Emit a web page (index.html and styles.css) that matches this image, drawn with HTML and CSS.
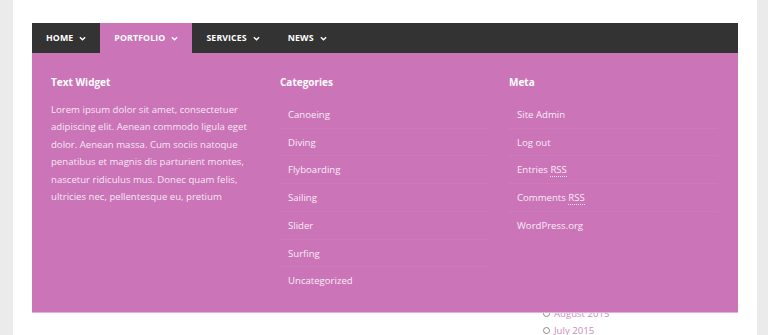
FILE: index.html
```html
<!DOCTYPE html>
<html lang="en">
<head>
<meta charset="utf-8">
<title>Mega menu</title>
<link rel="stylesheet" href="styles.css">
</head>
<body>
<div class="page">
  <header class="masthead">
    <nav class="nav">
      <ul class="menu">
        <li class="menu-item"><a href="#">Home<svg class="chev" viewBox="0 0 8 5"><path d="M1 1l3 3 3-3"/></svg></a></li>
        <li class="menu-item active"><a href="#">Portfolio<svg class="chev" viewBox="0 0 8 5"><path d="M1 1l3 3 3-3"/></svg></a></li>
        <li class="menu-item"><a href="#">Services<svg class="chev" viewBox="0 0 8 5"><path d="M1 1l3 3 3-3"/></svg></a></li>
        <li class="menu-item"><a href="#">News<svg class="chev" viewBox="0 0 8 5"><path d="M1 1l3 3 3-3"/></svg></a></li>
      </ul>
    </nav>
    <div class="mega">
      <section class="col">
        <h3 class="col-title">Text Widget</h3>
        <p class="col-text">Lorem ipsum dolor sit amet, consectetuer adipiscing elit. Aenean commodo ligula eget dolor. Aenean massa. Cum sociis natoque penatibus et magnis dis parturient montes, nascetur ridiculus mus. Donec quam felis, ultricies nec, pellentesque eu, pretium</p>
      </section>
      <section class="col">
        <h3 class="col-title">Categories</h3>
        <ul class="links">
          <li><a href="#">Canoeing</a></li>
          <li><a href="#">Diving</a></li>
          <li><a href="#">Flyboarding</a></li>
          <li><a href="#">Sailing</a></li>
          <li><a href="#">Slider</a></li>
          <li><a href="#">Surfing</a></li>
          <li><a href="#">Uncategorized</a></li>
        </ul>
      </section>
      <section class="col">
        <h3 class="col-title">Meta</h3>
        <ul class="links">
          <li><a href="#">Site Admin</a></li>
          <li><a href="#">Log out</a></li>
          <li><a href="#">Entries <abbr title="Really Simple Syndication">RSS</abbr></a></li>
          <li><a href="#">Comments <abbr title="Really Simple Syndication">RSS</abbr></a></li>
          <li><a href="#">WordPress.org</a></li>
        </ul>
      </section>
    </div>
  </header>
  <div class="content">
    <main class="main"></main>
    <aside class="sidebar">
      <ul class="archive">
        <li><a href="#">August 2015</a></li>
        <li><a href="#">July 2015</a></li>
      </ul>
    </aside>
  </div>
</div>
</body>
</html>
```

FILE: styles.css
```css
* { box-sizing: border-box; }
html, body { margin: 0; height: 100%; }
body {
  background: #ebebeb;
  font-family: "Open Sans", "Liberation Sans", sans-serif;
  padding: 0 11px 0 13px;
  overflow: hidden;
}
.page {
  background: #fff;
  height: 100%;
  padding: 23px 19px 0;
}
.masthead { position: relative; }
.nav { background: #333; height: 30px; }
.menu { list-style: none; margin: 0; padding: 0; display: flex; height: 100%; }
.menu-item a {
  display: flex;
  align-items: center;
  height: 30px;
  padding: 0 14px;
  color: #fff;
  text-decoration: none;
  text-transform: uppercase;
  font-weight: 700;
  font-size: 8.8px;
  letter-spacing: 0.1px;
}
.menu-item.active a { background: #cb74b8; }
.chev { width: 7px; height: 5px; margin-left: 6px; fill: none; stroke: #fff; stroke-width: 1.6; }
.mega {
  position: absolute;
  left: 0; right: 0; top: 30px;
  height: 260px;
  background: #cb74b8;
  border-bottom: 1px solid #e3b0d8;
  display: grid;
  grid-template-columns: repeat(3, 229px);
  padding: 22px 0 0 19px;
  z-index: 2;
}
.col { padding-right: 20px; }
.col-title {
  margin: 0 0 12px;
  font-size: 10px;
  line-height: 14px;
  font-weight: 700;
  color: #fff;
}
.col-text {
  margin: 0;
  font-size: 9.6px;
  line-height: 17.4px;
  color: rgba(255,255,255,0.86);
}
.links { list-style: none; margin: 1px 0 0; padding: 0; }
.links li {
  padding: 7px 8px 5px;
  line-height: 14.7px;
  font-size: 9.6px;
  border-bottom: 1px solid rgba(255,255,255,0.05);
}
.links li:last-child { border-bottom: 0; }
.links a { color: rgba(255,255,255,0.9); text-decoration: none; }
abbr { text-decoration: none; border-bottom: 1px dotted rgba(255,255,255,0.8); }
.content { display: grid; grid-template-columns: 1fr 195px; }
.sidebar { padding-top: 252px; }
.archive {
  margin: 0;
  padding: 0;
  list-style: none;
  font-size: 9.6px;
  line-height: 17px;
}
.archive li { display: flex; align-items: center; }
.archive li::before {
  content: "";
  width: 5px; height: 5px;
  border: 1px solid #8a8a8a;
  border-radius: 50%;
  margin-right: 4px;
}
.archive a { color: #c98bbf; text-decoration: none; }
```
